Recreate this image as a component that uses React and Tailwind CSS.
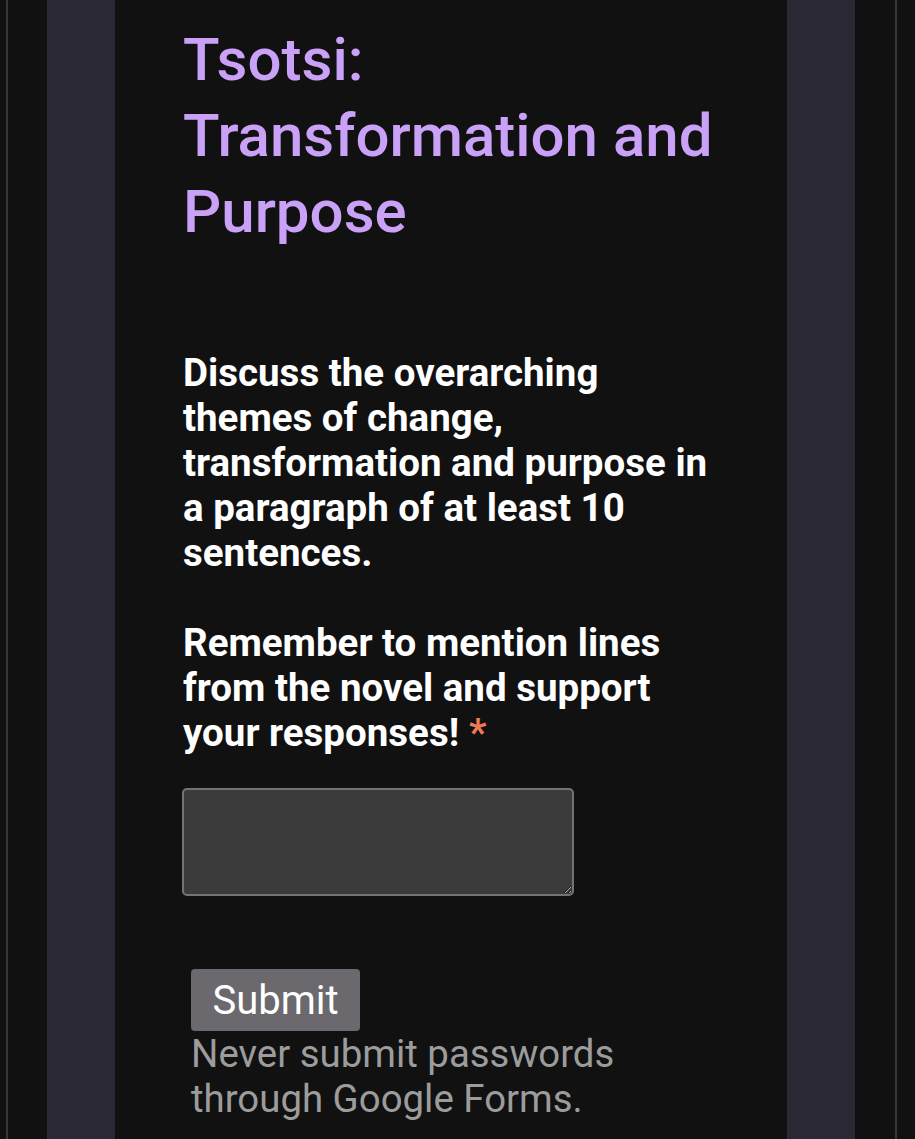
export default function App() {
  return (
    <div className="min-h-[1139px] w-full bg-[#111111] pl-[6px] pr-[18px] flex" style={{ fontFamily: 'Roboto, "Noto Sans", sans-serif' }}>
      <div className="flex-1 flex border-x-2 border-[#383838] pl-[39px] pr-[40px]">
        <div className="flex-1 flex bg-[#292833] px-[68px]">
          <div className="flex-1 bg-[#111111] pl-[68px] pr-[30px] pt-[22px] pb-[16px]">
            <h1 className="text-[60px] leading-[76px] font-medium text-[#c9a1f7]">
              Tsotsi:<br />Transformation and<br />Purpose
            </h1>
            <div className="mt-[100px] text-[38.5px] leading-[45px] font-bold text-white max-w-[545px]">
              <p>Discuss the overarching themes of change, transformation and purpose in a paragraph of at least 10 sentences.</p>
              <p className="mt-[45px]">
                Remember to mention lines from the novel and support your responses!<span className="ml-[10px] text-[#ee7a57]">*</span>
              </p>
            </div>
            <textarea className="mt-[33px] -ml-px block w-[392px] h-[108px] bg-[#3b3b3b] border-2 border-[#737373] rounded-[5px]" />
            <div className="mt-[73px] pl-[8px]">
              <button className="block bg-[#6b696e] text-white text-[40px] leading-[45px] w-[169px] h-[62px] rounded-[4px]">Submit</button>
              <p className="mt-0 text-[38.4px] leading-[45px] text-[#9c9c9c]">
                Never submit passwords<br />through Google Forms.
              </p>
            </div>
          </div>
        </div>
      </div>
    </div>
  );
}
